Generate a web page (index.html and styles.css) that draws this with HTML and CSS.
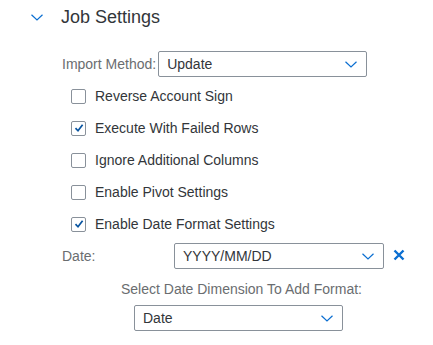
FILE: index.html
```html
<!DOCTYPE html>
<html>
<head>
<meta charset="utf-8">
<link rel="stylesheet" href="styles.css">
</head>
<body>
<div class="panel">
  <div class="header">
    <svg class="toggle" width="12" height="7" viewBox="0 0 12 7"><path d="M0.5 0.8 L6 6 L11.5 0.8" fill="none" stroke="#0a6ed1" stroke-width="1.2"/></svg>
    <h2 class="title">Job Settings</h2>
  </div>
  <div class="form">
    <div class="row-import">
      <span class="label">Import Method:</span>
      <div class="select select-import">
        <span class="value">Update</span>
        <svg class="arrow" width="12" height="7" viewBox="0 0 12 7"><path d="M0.5 0.8 L6 6 L11.5 0.8" fill="none" stroke="#0a6ed1" stroke-width="1.2"/></svg>
      </div>
    </div>
    <ul class="checks">
      <li class="check"><span class="box"></span><span class="text">Reverse Account Sign</span></li>
      <li class="check"><span class="box"><svg width="12" height="12" viewBox="0 0 12 12"><path d="M2.5 6.2 L5 8.8 L9.6 2.8" fill="none" stroke="#0854a0" stroke-width="1.7"/></svg></span><span class="text">Execute With Failed Rows</span></li>
      <li class="check"><span class="box"></span><span class="text">Ignore Additional Columns</span></li>
      <li class="check"><span class="box"></span><span class="text">Enable Pivot Settings</span></li>
      <li class="check"><span class="box"><svg width="12" height="12" viewBox="0 0 12 12"><path d="M2.5 6.2 L5 8.8 L9.6 2.8" fill="none" stroke="#0854a0" stroke-width="1.7"/></svg></span><span class="text">Enable Date Format Settings</span></li>
    </ul>
    <div class="row-date">
      <span class="label date-label">Date:</span>
      <div class="select select-date">
        <span class="value">YYYY/MM/DD</span>
        <svg class="arrow" width="12" height="7" viewBox="0 0 12 7"><path d="M0.5 0.8 L6 6 L11.5 0.8" fill="none" stroke="#0a6ed1" stroke-width="1.2"/></svg>
      </div>
      <svg class="remove" width="12" height="12" viewBox="0 0 12 12"><path d="M1.5 1.5 L10.5 10.5 M10.5 1.5 L1.5 10.5" fill="none" stroke="#0a6ed1" stroke-width="2.4"/></svg>
    </div>
    <div class="dimension">
      <span class="label">Select Date Dimension To Add Format:</span>
      <div class="select select-dim">
        <span class="value">Date</span>
        <svg class="arrow" width="12" height="7" viewBox="0 0 12 7"><path d="M0.5 0.8 L6 6 L11.5 0.8" fill="none" stroke="#0a6ed1" stroke-width="1.2"/></svg>
      </div>
    </div>
  </div>
</div>
</body>
</html>
```
FILE: styles.css
```css
html, body {
  margin: 0;
  padding: 0;
  background: #ffffff;
}
body {
  font-family: "Liberation Sans", Arial, sans-serif;
  color: #32363a;
  font-size: 14px;
}
.panel {
  width: 433px;
}
.header {
  display: flex;
  align-items: center;
  height: 34px;
  padding-left: 31px;
}
.toggle {
  display: block;
  margin-right: 18px;
}
.title {
  margin: 0;
  font-size: 18px;
  font-weight: normal;
  color: #32363a;
  line-height: 22px;
}
.form {
  padding-top: 17px;
  padding-left: 62px;
}
.label {
  color: #6a6d70;
  font-size: 14px;
}
.select {
  box-sizing: border-box;
  display: flex;
  align-items: center;
  justify-content: space-between;
  border: 1px solid #89919a;
  border-radius: 2px;
  background: #fff;
  padding: 0 9px 0 8px;
}
.select .value {
  color: #32363a;
  font-size: 14px;
}
.arrow {
  display: block;
}
.row-import {
  display: flex;
  align-items: center;
  gap: 2px;
}
.select-import {
  width: 209px;
  height: 26px;
}
.checks {
  list-style: none;
  margin: 3px 0 0 0;
  padding: 0 0 0 9px;
}
.check {
  display: flex;
  align-items: center;
  height: 32px;
}
.box {
  box-sizing: border-box;
  width: 15px;
  height: 15px;
  border: 1px solid #89919a;
  border-radius: 2px;
  display: flex;
  align-items: center;
  justify-content: center;
  margin-right: 9px;
}
.box svg {
  display: block;
}
.check .text {
  color: #32363a;
}
.row-date {
  display: flex;
  align-items: center;
  margin-top: 3px;
}
.date-label {
  width: 112px;
}
.select-date {
  width: 210px;
  height: 26px;
}
.remove {
  display: block;
  margin-left: 9px;
  margin-top: -2px;
}
.dimension {
  display: flex;
  flex-direction: column;
  align-items: flex-start;
  padding-left: 59px;
  margin-top: 12px;
}
.dimension .label {
  line-height: 16px;
}
.select-dim {
  width: 209px;
  height: 26px;
  margin-top: 8px;
  margin-left: 13px;
}
```
